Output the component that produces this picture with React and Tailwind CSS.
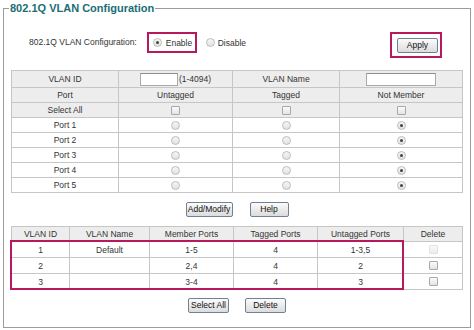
import React from 'react';

const PINK = 'border-[#b8195e]';

const Radio = ({ checked }) => (
  <span className="inline-flex w-[9px] h-[9px] rounded-full border border-[#bcbcbc] bg-gradient-to-b from-[#f6f6f6] to-[#e2e2e2] items-center justify-center">
    {checked && <span className="w-[3px] h-[3px] rounded-full bg-[#444]" />}
  </span>
);

const Check = ({ faded }) => (
  <span
    className={
      'inline-block w-[9px] h-[9px] rounded-[1px] border bg-gradient-to-b from-[#fafafa] to-[#e4e4e4] ' +
      (faded ? 'border-[#d6d6d6] opacity-70' : 'border-[#a8a8a8]')
    }
  />
);

const Btn = ({ children, w }) => (
  <button
    className="h-[15px] rounded-[2px] border border-[#6f8194] bg-gradient-to-b from-[#fbfbfb] to-[#dcdcdc] text-[8.5px] leading-none text-[#111] px-0"
    style={{ width: w }}
  >
    {children}
  </button>
);

const Cell = ({ children, gray, h = 'h-[15px]' }) => (
  <div
    className={
      'flex items-center justify-center border-r border-b border-[#c6c6c6] ' +
      h +
      (gray ? ' bg-[#ededed]' : ' bg-white')
    }
  >
    {children}
  </div>
);

const ports = ['Port 1', 'Port 2', 'Port 3', 'Port 4', 'Port 5'];

const vlans = [
  { id: '1', name: 'Default', member: '1-5', tagged: '4', untagged: '1-3,5', faded: true },
  { id: '2', name: '', member: '2,4', tagged: '4', untagged: '2' },
  { id: '3', name: '', member: '3-4', tagged: '4', untagged: '3' },
];

export default function App() {
  return (
    <div className="w-[474px] h-[330px] bg-white pt-[1px] pl-[3px] font-['Liberation_Sans',Arial,sans-serif] text-[8.5px] leading-[10px] text-[#333]">
      <fieldset className="w-[467px] h-[327px] border border-[#9c9c9c] pl-[7px] pr-[7px]">
        <legend className="ml-[-2px] px-[1px] text-[11px] leading-[14px] font-bold text-[#1a6e74]">
          802.1Q VLAN Configuration
        </legend>

        {/* mode row */}
        <div className="flex items-start mt-[17px] h-[26px]">
          <div className="h-[20px] flex items-center ml-[18px]">802.1Q VLAN Configuration:</div>
          <div className={'ml-[10px] w-[50px] h-[21px] border-2 ' + PINK + ' flex items-center pl-[4px] gap-[4px]'}>
            <Radio checked />
            <span>Enable</span>
          </div>
          <div className="ml-[9px] h-[21px] flex items-center gap-[3px]">
            <Radio />
            <span>Disable</span>
          </div>
          <div className={'ml-auto mr-[21px] w-[52px] h-[26px] border-2 ' + PINK + ' flex items-center pl-[5px] pt-[1px]'}>
            <Btn w={41}>Apply</Btn>
          </div>
        </div>

        {/* port membership table */}
        <div className="mt-[12px] grid grid-cols-[107px_114px_107px_123px] border-l border-t border-[#c6c6c6]">
          <Cell gray h="h-[17px]">VLAN ID</Cell>
          <Cell gray h="h-[17px]">
            <span className="w-[38px] h-[13px] border border-[#a9a9a9] border-t-[#8e8e8e] bg-white" />
            <span className="ml-[1px]">(1-4094)</span>
          </Cell>
          <Cell gray h="h-[17px]">VLAN Name</Cell>
          <Cell gray h="h-[17px]">
            <span className="w-[70px] h-[13px] border border-[#a9a9a9] border-t-[#8e8e8e] bg-white" />
          </Cell>

          <Cell gray>Port</Cell>
          <Cell gray>Untagged</Cell>
          <Cell gray>Tagged</Cell>
          <Cell gray>Not Member</Cell>

          <Cell gray>Select All</Cell>
          <Cell gray><Check /></Cell>
          <Cell gray><Check /></Cell>
          <Cell gray><Check /></Cell>

          {ports.map((p) => (
            <React.Fragment key={p}>
              <Cell>{p}</Cell>
              <Cell><Radio /></Cell>
              <Cell><Radio /></Cell>
              <Cell><Radio checked /></Cell>
            </React.Fragment>
          ))}
        </div>

        <div className="mt-[9px] flex justify-center gap-[17px]">
          <Btn w={47}>Add/Modify</Btn>
          <Btn w={39}>Help</Btn>
        </div>

        {/* vlan list table */}
        <div className="relative mt-[9px]">
          <div className="grid grid-cols-[58px_80px_84px_84px_86px_59px] border-l border-t border-[#c6c6c6]">
            {['VLAN ID', 'VLAN Name', 'Member Ports', 'Tagged Ports', 'Untagged Ports', 'Delete'].map((h) => (
              <Cell gray key={h} h="h-[15px]">{h}</Cell>
            ))}
            {vlans.map((v) => (
              <React.Fragment key={v.id}>
                <Cell h="h-[16px]">{v.id}</Cell>
                <Cell h="h-[16px]">{v.name}</Cell>
                <Cell h="h-[16px]">{v.member}</Cell>
                <Cell h="h-[16px]">{v.tagged}</Cell>
                <Cell h="h-[16px]">{v.untagged}</Cell>
                <Cell h="h-[16px]"><Check faded={v.faded} /></Cell>
              </React.Fragment>
            ))}
          </div>
          <div className={'absolute left-[-1px] top-[14px] w-[394px] h-[50px] border-2 ' + PINK + ' pointer-events-none'} />
        </div>

        <div className="mt-[8px] flex justify-center gap-[16px]">
          <Btn w={41}>Select All</Btn>
          <Btn w={41}>Delete</Btn>
        </div>
      </fieldset>
    </div>
  );
}
